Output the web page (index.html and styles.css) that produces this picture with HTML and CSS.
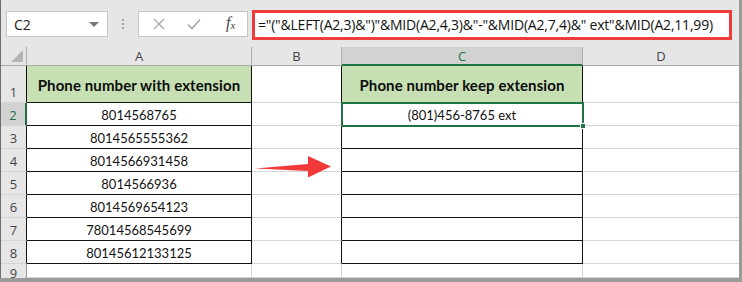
FILE: index.html
```html
<!DOCTYPE html>
<html lang="en">
<head>
    <meta charset="UTF-8">
    <title>Phone number keep extension</title>
    <link rel="stylesheet" href="styles.css">
</head>
<body>
    <div class="window">
        <div class="formula-bar">
            <div class="name-box">
                <span>C2</span>
                <span class="caret"></span>
            </div>
            <div class="grip"><i></i><i></i><i></i></div>
            <div class="fx-buttons">
                <svg class="btn-icon" width="14" height="14" viewBox="0 0 14 14">
                    <path d="M2 2 L12 12 M12 2 L2 12" stroke="#a8a8a8" stroke-width="1.3" fill="none"/>
                </svg>
                <svg class="btn-icon" width="14" height="12" viewBox="0 0 14 12">
                    <path d="M1 6.5 L5 10.5 L13 1.5" stroke="#a8a8a8" stroke-width="1.6" fill="none"/>
                </svg>
                <span class="fx">f<sub>x</sub></span>
            </div>
            <div class="formula-input">="("&amp;LEFT(A2,3)&amp;")"&amp;MID(A2,4,3)&amp;"-"&amp;MID(A2,7,4)&amp;" ext"&amp;MID(A2,11,99)</div>
        </div>

        <div class="sheet">
            <div class="hdr corner"><span class="tri"></span></div>
            <div class="hdr col">A</div>
            <div class="hdr col">B</div>
            <div class="hdr col active">C</div>
            <div class="hdr col">D</div>

            <div class="hdr row edge">1</div>
            <div class="cell title bl">Phone number with extension</div>
            <div class="cell br"></div>
            <div class="cell title bl">Phone number keep extension</div>
            <div class="cell"></div>

            <div class="hdr row active">2</div>
            <div class="cell bl">8014568765</div>
            <div class="cell br"></div>
            <div class="cell bl selected">(801)456-8765 ext<span class="handle"></span></div>
            <div class="cell"></div>

            <div class="hdr row edge">3</div>
            <div class="cell bl">8014565555362</div>
            <div class="cell br"></div>
            <div class="cell bl"></div>
            <div class="cell"></div>

            <div class="hdr row edge">4</div>
            <div class="cell bl">8014566931458</div>
            <div class="cell br"></div>
            <div class="cell bl"></div>
            <div class="cell"></div>

            <div class="hdr row edge">5</div>
            <div class="cell bl">8014566936</div>
            <div class="cell br"></div>
            <div class="cell bl"></div>
            <div class="cell"></div>

            <div class="hdr row edge">6</div>
            <div class="cell bl">8014569654123</div>
            <div class="cell br"></div>
            <div class="cell bl"></div>
            <div class="cell"></div>

            <div class="hdr row edge">7</div>
            <div class="cell bl">78014568545699</div>
            <div class="cell br"></div>
            <div class="cell bl"></div>
            <div class="cell"></div>

            <div class="hdr row edge">8</div>
            <div class="cell bl">80145612133125</div>
            <div class="cell br"></div>
            <div class="cell bl"></div>
            <div class="cell"></div>

            <div class="hdr row last">9</div>
            <div class="cell"></div>
            <div class="cell"></div>
            <div class="cell"></div>
            <div class="cell"></div>

            <svg class="arrow" width="78" height="24" viewBox="0 0 78 24">
                <path d="M0 12.5 L53 8 L53 0 L76 10.5 L53 21.5 L53 15 Z" fill="#f2393a"/>
            </svg>
        </div>
    </div>
</body>
</html>
```

FILE: styles.css
```css
* {
    box-sizing: border-box;
}

body {
    margin: 0;
    width: 742px;
    height: 282px;
    overflow: hidden;
    background: #9a9a9a;
    font-family: 'Lato', 'Liberation Sans', sans-serif;
}

.window {
    width: 739px;
    height: 278px;
    background: #ffffff;
    border-left: 1px solid #6e6e6e;
    overflow: hidden;
}

/* formula bar */

.formula-bar {
    height: 47px;
    background: #e6e6e6;
    display: flex;
    align-items: flex-start;
    padding-top: 11px;
    padding-left: 5px;
}

.name-box {
    width: 102px;
    height: 26px;
    background: #fff;
    border: 1px solid #c6c6c6;
    display: flex;
    align-items: center;
    justify-content: space-between;
    padding: 0 8px 0 7px;
    font-family: 'Open Sans', 'Liberation Sans', sans-serif;
    font-size: 14px;
    color: #222;
}

.caret {
    width: 0;
    height: 0;
    border-left: 5px solid transparent;
    border-right: 5px solid transparent;
    border-top: 5px solid #777;
}

.grip {
    width: 30px;
    height: 26px;
    display: flex;
    flex-direction: column;
    align-items: center;
    justify-content: center;
    gap: 2px;
}

.grip i {
    width: 2px;
    height: 2px;
    background: #a0a0a0;
}

.fx-buttons {
    width: 110px;
    height: 26px;
    background: #fff;
    border: 1px solid #c6c6c6;
    display: flex;
    align-items: center;
    padding-left: 13px;
    gap: 21px;
}

.fx {
    font-family: 'Liberation Serif', serif;
    font-style: italic;
    font-size: 16px;
    color: #444;
    margin-left: 4px;
    margin-top: -2px;
}

.fx sub {
    font-size: 11px;
    vertical-align: -1px;
}

.formula-input {
    margin-left: 4px;
    margin-top: -1px;
    width: 480px;
    height: 30px;
    background: #fff;
    border: 3px solid #ef3b3b;
    padding-left: 3px;
    font-family: 'Open Sans', 'Liberation Sans', sans-serif;
    font-size: 14px;
    letter-spacing: -0.2px;
    line-height: 24px;
    color: #111;
    white-space: nowrap;
    overflow: hidden;
}

/* sheet grid */

.sheet {
    position: relative;
    display: grid;
    grid-template-columns: 26px 225px 90px 241px 157px;
    grid-template-rows: 19px 37px repeat(7, 23px) 14px;
}

.hdr {
    background: #e6e6e6;
    color: #444;
    font-family: 'Open Sans', 'Liberation Sans', sans-serif;
    font-size: 13px;
    display: flex;
    align-items: center;
    justify-content: center;
    border-right: 1px solid #ababab;
    border-bottom: 1px solid #ababab;
    overflow: hidden;
}

.hdr.row {
    border-right: 1px solid #9b9b9b;
    border-bottom: 1px solid #d4d4d4;
    align-items: flex-end;
    padding-bottom: 1px;
}

.hdr.row.edge {
    border-right-color: #111;
}

.hdr.row.last {
    align-items: flex-start;
    padding: 0;
    line-height: 18px;
    border-bottom: none;
}

.hdr.col.active {
    background: #d2d2d2;
    color: #217346;
    border-bottom: 2px solid #217346;
}

.hdr.row.active {
    background: #d2d2d2;
    color: #217346;
    border-right: 2px solid #217346;
}

.corner {
    justify-content: flex-end;
    align-items: flex-end;
    padding: 0 3px 3px 0;
}

.tri {
    width: 0;
    height: 0;
    border-left: 12px solid transparent;
    border-bottom: 12px solid #b4b4b4;
}

.cell {
    border-right: 1px solid #d4d4d4;
    border-bottom: 1px solid #d4d4d4;
    display: flex;
    align-items: center;
    justify-content: center;
    font-size: 13px;
    color: #111;
    padding-top: 1px;
}

.cell.bl {
    border-right-color: #111;
    border-bottom-color: #111;
}

.cell.br {
    border-right-color: #111;
}

.cell.title {
    background: #c6e0b4;
    font-weight: bold;
    font-size: 15px;
    letter-spacing: 0.1px;
    color: #0c0c0c;
}

.cell.selected {
    position: relative;
    outline: 2px solid #217346;
    outline-offset: -1px;
    z-index: 1;
}

.handle {
    position: absolute;
    right: -4px;
    bottom: -4px;
    width: 6px;
    height: 6px;
    background: #217346;
    border: 1px solid #fff;
}

.arrow {
    position: absolute;
    left: 254px;
    top: 109px;
}
```
